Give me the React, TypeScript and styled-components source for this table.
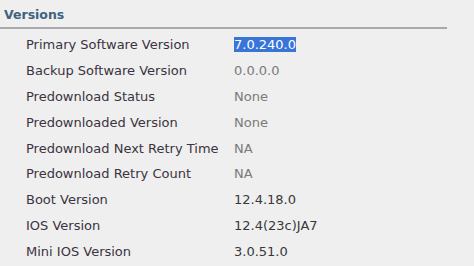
import { Fragment } from 'react';
import styled, { createGlobalStyle } from 'styled-components';

const GlobalStyle = createGlobalStyle`
	html, body {
		margin: 0;
		padding: 0;
		background: #efefef;
	}
	body {
		font-family: Tahoma, "DejaVu Sans", Verdana, sans-serif;
	}
`;

const Panel = styled.section`
	width: 474px;
	height: 266px;
	background: #efefef;
	overflow: hidden;
`;

const Header = styled.h2`
	margin: 0 27px 0 0;
	padding: 7px 0 5px 4px;
	border-bottom: 2px solid #a9a9ad;
	color: #40627e;
	font-size: 12.5px;
	font-weight: 700;
	line-height: 15px;
`;

const Table = styled.div`
	display: grid;
	grid-template-columns: 208px auto;
	grid-auto-rows: 25.8px;
	align-items: center;
	padding: 3px 0 0 26px;
	font-size: 13px;
`;

const Label = styled.span`
	color: #3b3340;
	white-space: nowrap;
`;

const Value = styled.span<{ $muted?: boolean }>`
	color: ${(p) => (p.$muted ? '#7a7a7a' : '#383838')};
	white-space: nowrap;
`;

const Selected = styled.span`
	background: #3875d7;
	color: #ffffff;
`;

type Row = { label: string; value: string; muted?: boolean; selected?: boolean };

const rows: Row[] = [
	{ label: 'Primary Software Version', value: '7.0.240.0', selected: true },
	{ label: 'Backup Software Version', value: '0.0.0.0', muted: true },
	{ label: 'Predownload Status', value: 'None', muted: true },
	{ label: 'Predownloaded Version', value: 'None', muted: true },
	{ label: 'Predownload Next Retry Time', value: 'NA', muted: true },
	{ label: 'Predownload Retry Count', value: 'NA', muted: true },
	{ label: 'Boot Version', value: '12.4.18.0' },
	{ label: 'IOS Version', value: '12.4(23c)JA7' },
	{ label: 'Mini IOS Version', value: '3.0.51.0' },
];

export default function App() {
	return (
		<>
			<GlobalStyle />
			<Panel>
				<Header>Versions</Header>
				<Table>
					{rows.map((r) => (
						<Fragment key={r.label}>
							<Label>{r.label}</Label>
							<Value $muted={r.muted}>
								{r.selected ? <Selected>{r.value}</Selected> : r.value}
							</Value>
						</Fragment>
					))}
				</Table>
			</Panel>
		</>
	);
}
